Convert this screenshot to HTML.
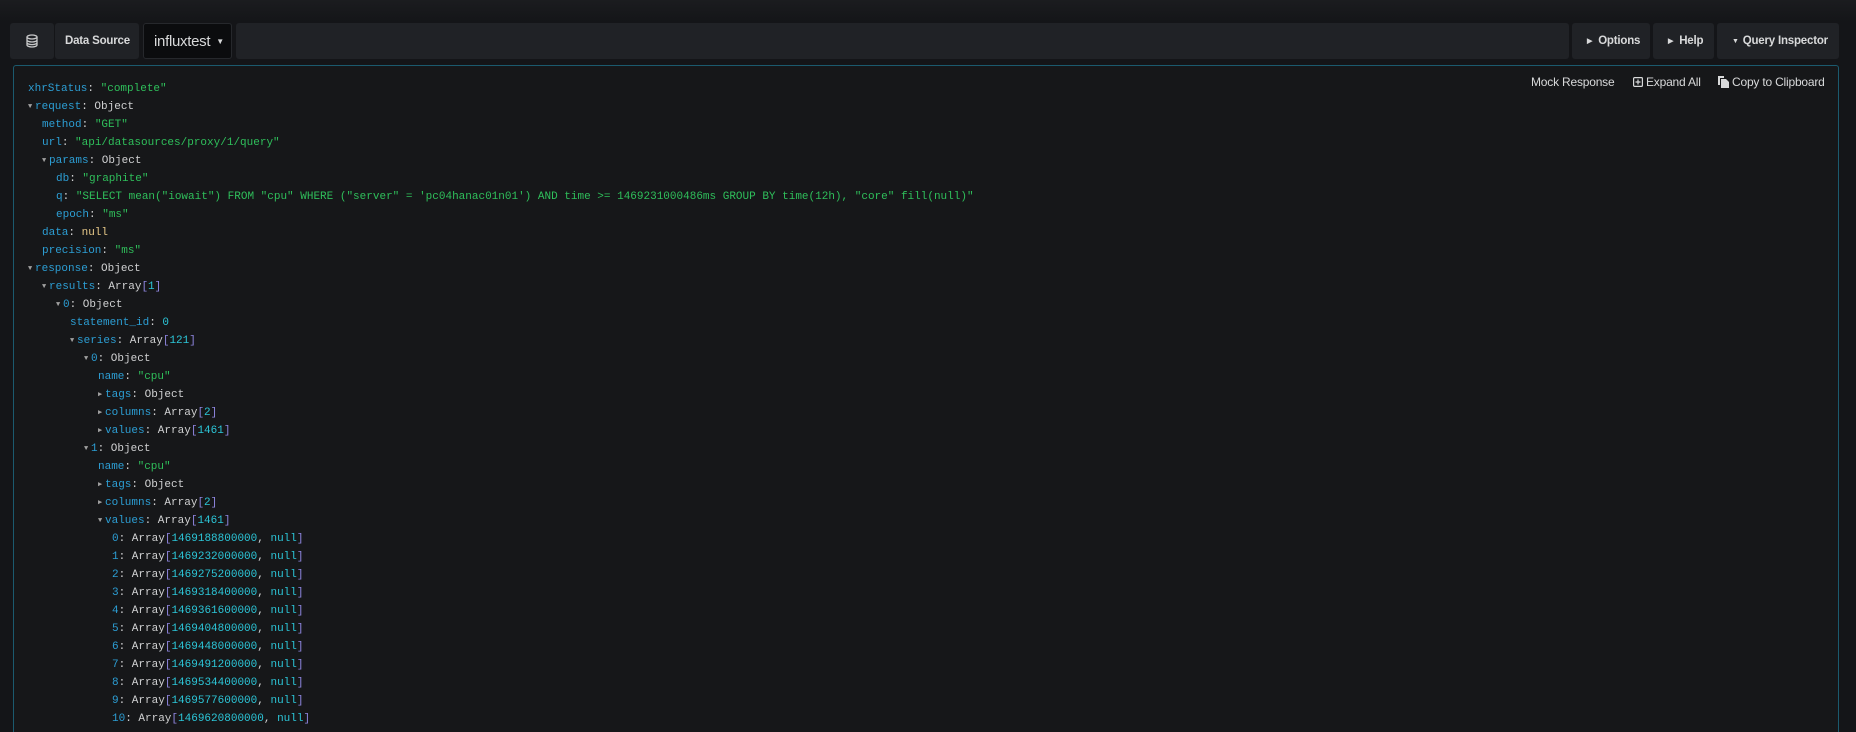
<!DOCTYPE html>
<html><head><meta charset="utf-8">
<style>
*{margin:0;padding:0;box-sizing:border-box}
html,body{width:1856px;height:732px;overflow:hidden;background:#141518;font-family:"Liberation Sans",sans-serif;position:relative}
body{background:linear-gradient(#1b1c1f 0,#141518 22px,#141518 100%)}
.b{position:absolute;top:23px;height:36px;background:#202226;border-radius:3px;color:#d8d9da;font-size:11.5px;font-weight:bold;display:flex;align-items:center;letter-spacing:-0.2px}
.tri{font-size:7px;margin-right:6px}
.panel{position:absolute;left:13px;top:65px;width:1826px;height:667px;background:#161719;border:1px solid #1b5a6e;border-bottom:none;border-radius:3px 3px 0 0}
.ln{position:absolute;font-family:"Liberation Mono","DejaVu Sans Mono",monospace;font-size:11px;line-height:18px;white-space:pre;color:#d0d1d2}
.k{color:#2c9ed4}.s{color:#2fbf5b}.n{color:#2cc6d8}.p{color:#8f86e0}.y{color:#e6c888}
.a{color:#a0a0a0;font-size:7px;display:inline-block;width:7px;vertical-align:1px}
.act{position:absolute;top:75px;color:#d8d9da;font-size:12px;letter-spacing:-0.2px}
</style></head><body>
<div class="b" style="left:10px;width:44px;justify-content:center">
<svg width="14" height="14" viewBox="0 0 14 14" fill="none" stroke="#c8c9ca" stroke-width="1.3"><ellipse cx="7" cy="3" rx="5" ry="2"/><path d="M2 3v8c0 1.1 2.2 2 5 2s5-.9 5-2V3M2 6c0 1.1 2.2 2 5 2s5-.9 5-2M2 8.6c0 1.1 2.2 2 5 2s5-.9 5-2"/></svg></div>
<div class="b" style="left:55px;width:84px;padding-left:10px">Data Source</div>
<div class="b" style="left:143px;width:89px;background:#0b0c0e;border:1px solid #26282c;font-weight:normal;font-size:15px;padding-left:10px;letter-spacing:-0.3px">influxtest <span style="font-size:8px;margin-left:6px">&#9660;</span></div>
<div class="b" style="left:236px;width:1333px"></div>
<div class="b" style="left:1572px;width:78px;padding-left:15px"><span class="tri">&#9654;</span>Options</div>
<div class="b" style="left:1653px;width:61px;padding-left:15px"><span class="tri">&#9654;</span>Help</div>
<div class="b" style="left:1717px;width:122px;padding-left:15px"><span class="tri" style="margin-right:4px">&#9660;</span>Query Inspector</div>
<div class="panel"></div>
<div class="act" style="left:1531px">Mock Response</div>
<div class="act" style="left:1633px"><svg width="10" height="10" viewBox="0 0 10 10" style="vertical-align:-1px;margin-right:3px" fill="none" stroke="#d8d9da" stroke-width="1.2"><rect x=".6" y=".6" width="8.8" height="8.8" rx="1"/><path d="M5 2.5v5M2.5 5h5"/></svg>Expand All</div>
<div class="act" style="left:1718px"><svg width="11" height="12" viewBox="0 0 11 12" style="vertical-align:-2px;margin-right:3px" fill="#d8d9da"><path d="M0 0h6v2H2v7H0z"/><path d="M3 3h5l3 3v6H3z"/></svg>Copy to Clipboard</div>
<div class="ln" style="left:28px;top:80px"><span class="k">xhrStatus</span>: <span class="s">"complete"</span></div>
<div class="ln" style="left:28px;top:98px"><span class="a">&#9660;</span><span class="k">request</span>: Object</div>
<div class="ln" style="left:42px;top:116px"><span class="k">method</span>: <span class="s">"GET"</span></div>
<div class="ln" style="left:42px;top:134px"><span class="k">url</span>: <span class="s">"api/datasources/proxy/1/query"</span></div>
<div class="ln" style="left:42px;top:152px"><span class="a">&#9660;</span><span class="k">params</span>: Object</div>
<div class="ln" style="left:56px;top:170px"><span class="k">db</span>: <span class="s">"graphite"</span></div>
<div class="ln" style="left:56px;top:188px"><span class="k">q</span>: <span class="s">"SELECT mean("iowait") FROM "cpu" WHERE ("server" = 'pc04hanac01n01') AND time &gt;= 1469231000486ms GROUP BY time(12h), "core" fill(null)"</span></div>
<div class="ln" style="left:56px;top:206px"><span class="k">epoch</span>: <span class="s">"ms"</span></div>
<div class="ln" style="left:42px;top:224px"><span class="k">data</span>: <span class="y">null</span></div>
<div class="ln" style="left:42px;top:242px"><span class="k">precision</span>: <span class="s">"ms"</span></div>
<div class="ln" style="left:28px;top:260px"><span class="a">&#9660;</span><span class="k">response</span>: Object</div>
<div class="ln" style="left:42px;top:278px"><span class="a">&#9660;</span><span class="k">results</span>: Array<span class="p">[</span><span class="n">1</span><span class="p">]</span></div>
<div class="ln" style="left:56px;top:296px"><span class="a">&#9660;</span><span class="k">0</span>: Object</div>
<div class="ln" style="left:70px;top:314px"><span class="k">statement_id</span>: <span class="n">0</span></div>
<div class="ln" style="left:70px;top:332px"><span class="a">&#9660;</span><span class="k">series</span>: Array<span class="p">[</span><span class="n">121</span><span class="p">]</span></div>
<div class="ln" style="left:84px;top:350px"><span class="a">&#9660;</span><span class="k">0</span>: Object</div>
<div class="ln" style="left:98px;top:368px"><span class="k">name</span>: <span class="s">"cpu"</span></div>
<div class="ln" style="left:98px;top:386px"><span class="a">&#9654;</span><span class="k">tags</span>: Object</div>
<div class="ln" style="left:98px;top:404px"><span class="a">&#9654;</span><span class="k">columns</span>: Array<span class="p">[</span><span class="n">2</span><span class="p">]</span></div>
<div class="ln" style="left:98px;top:422px"><span class="a">&#9654;</span><span class="k">values</span>: Array<span class="p">[</span><span class="n">1461</span><span class="p">]</span></div>
<div class="ln" style="left:84px;top:440px"><span class="a">&#9660;</span><span class="k">1</span>: Object</div>
<div class="ln" style="left:98px;top:458px"><span class="k">name</span>: <span class="s">"cpu"</span></div>
<div class="ln" style="left:98px;top:476px"><span class="a">&#9654;</span><span class="k">tags</span>: Object</div>
<div class="ln" style="left:98px;top:494px"><span class="a">&#9654;</span><span class="k">columns</span>: Array<span class="p">[</span><span class="n">2</span><span class="p">]</span></div>
<div class="ln" style="left:98px;top:512px"><span class="a">&#9660;</span><span class="k">values</span>: Array<span class="p">[</span><span class="n">1461</span><span class="p">]</span></div>
<div class="ln" style="left:112px;top:530px"><span class="k">0</span>: Array<span class="p">[</span><span class="n">1469188800000</span>, <span class="n">null</span><span class="p">]</span></div>
<div class="ln" style="left:112px;top:548px"><span class="k">1</span>: Array<span class="p">[</span><span class="n">1469232000000</span>, <span class="n">null</span><span class="p">]</span></div>
<div class="ln" style="left:112px;top:566px"><span class="k">2</span>: Array<span class="p">[</span><span class="n">1469275200000</span>, <span class="n">null</span><span class="p">]</span></div>
<div class="ln" style="left:112px;top:584px"><span class="k">3</span>: Array<span class="p">[</span><span class="n">1469318400000</span>, <span class="n">null</span><span class="p">]</span></div>
<div class="ln" style="left:112px;top:602px"><span class="k">4</span>: Array<span class="p">[</span><span class="n">1469361600000</span>, <span class="n">null</span><span class="p">]</span></div>
<div class="ln" style="left:112px;top:620px"><span class="k">5</span>: Array<span class="p">[</span><span class="n">1469404800000</span>, <span class="n">null</span><span class="p">]</span></div>
<div class="ln" style="left:112px;top:638px"><span class="k">6</span>: Array<span class="p">[</span><span class="n">1469448000000</span>, <span class="n">null</span><span class="p">]</span></div>
<div class="ln" style="left:112px;top:656px"><span class="k">7</span>: Array<span class="p">[</span><span class="n">1469491200000</span>, <span class="n">null</span><span class="p">]</span></div>
<div class="ln" style="left:112px;top:674px"><span class="k">8</span>: Array<span class="p">[</span><span class="n">1469534400000</span>, <span class="n">null</span><span class="p">]</span></div>
<div class="ln" style="left:112px;top:692px"><span class="k">9</span>: Array<span class="p">[</span><span class="n">1469577600000</span>, <span class="n">null</span><span class="p">]</span></div>
<div class="ln" style="left:112px;top:710px"><span class="k">10</span>: Array<span class="p">[</span><span class="n">1469620800000</span>, <span class="n">null</span><span class="p">]</span></div>
</body></html>
